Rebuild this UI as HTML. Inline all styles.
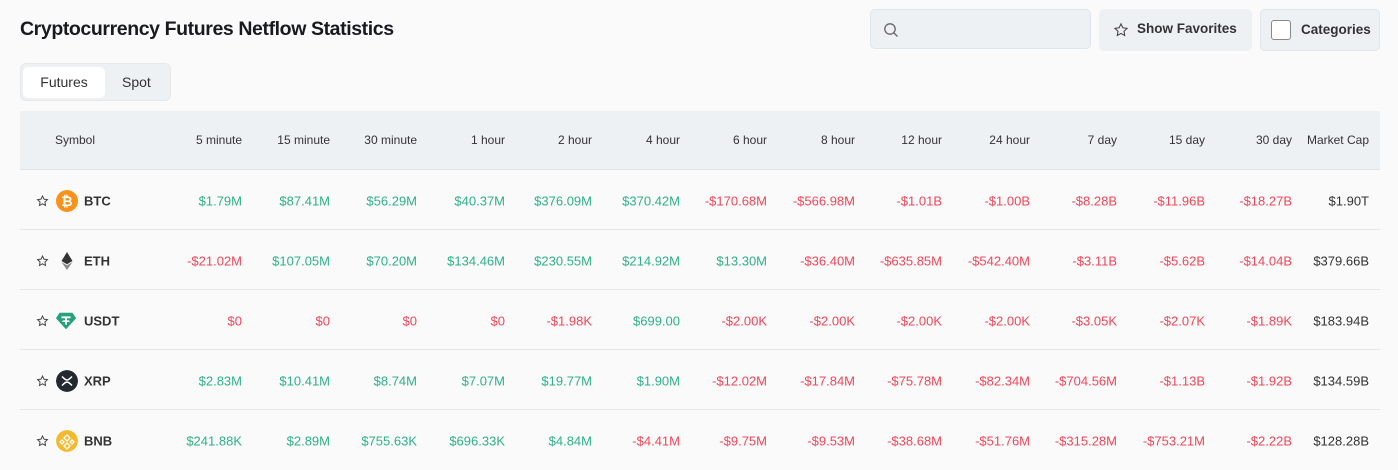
<!DOCTYPE html>
<html><head><meta charset="utf-8"><style>
*{margin:0;padding:0;box-sizing:border-box}
body{width:1398px;height:468px;background:#fafafa;font-family:"Liberation Sans",sans-serif;position:relative;overflow:hidden;color:#1e2329}
.a{position:absolute;white-space:nowrap}
h1{position:absolute;left:20px;top:18px;font-size:19.5px;font-weight:700;letter-spacing:-0.4px;color:#181a20}
.tabs{left:20px;top:63px;width:151px;height:38px;background:#eef1f4;border-radius:6px;border:1px solid #e6e8ea}
.tab{position:absolute;top:3px;height:31px;line-height:31px;font-size:14px;color:#333}
.hdr{left:20px;top:111px;width:1360px;height:59px;background:#eef1f4;border-bottom:1px solid #e2e5e8}
.row{left:20px;width:1360px;height:60px;border-bottom:1px solid #e6e6e6}
.h{font-size:12px;color:#333;transform:translateY(-50%)}
.c{font-size:13px;transform:translateY(-50%)}
.g{color:#2eb08a}.r{color:#f0475a}.k{color:#333}
.sym{font-size:13px;font-weight:700;color:#333;transform:translateY(-50%)}
.star{transform:translateY(-50%)}
.ico{width:22px;height:22px;border-radius:50%;transform:translateY(-50%)}
</style></head><body>
<h1>Cryptocurrency Futures Netflow Statistics</h1>
<div class="a" style="left:870px;top:9px;width:221px;height:40px;background:#eef1f4;border:1px solid #dfe5ec;border-radius:5px"><svg style="position:absolute;left:12px;top:12px" width="16" height="16" viewBox="0 0 16 16" fill="none" stroke="#666" stroke-width="1.3"><circle cx="7" cy="7" r="5.2"/><path d="M11 11l3.5 3.5"/></svg></div>
<div class="a" style="left:1099px;top:9px;width:153px;height:42px;background:#eef1f4;border-radius:5px"><svg style="position:absolute;left:14px;top:13px" width="16" height="16" viewBox="0 0 24 24" fill="none" stroke="#444" stroke-width="1.6"><path d="M12 2.8l2.8 5.8 6.3.9-4.6 4.4 1.1 6.3L12 17.2l-5.6 3 1.1-6.3L2.9 9.5l6.3-.9z"/></svg><span style="position:absolute;left:38px;top:12px;font-size:13.5px;font-weight:700;color:#333">Show Favorites</span></div>
<div class="a" style="left:1260px;top:9px;width:120px;height:42px;background:#eef1f4;border:1px solid #dfe5ec;border-radius:5px"><div style="position:absolute;left:10px;top:10px;width:20px;height:20px;border:1px solid #888;border-radius:3px;background:#fff"></div><span style="position:absolute;left:40px;top:12px;font-size:13.5px;font-weight:700;color:#333">Categories</span></div>
<div class="a tabs"><div class="tab" style="left:2px;width:82px;background:#fff;border-radius:5px;text-align:center">Futures</div><div class="tab" style="left:101px">Spot</div></div>
<div class="a hdr"></div>
<div class="a row" style="top:170px"></div><div class="a row" style="top:230px"></div><div class="a row" style="top:290px"></div><div class="a row" style="top:350px"></div><div class="a row" style="top:410px;border:none"></div>
<span class="a h" style="left:55px;top:140px">Symbol</span>
<span class="a h" style="right:1156px;top:140px">5 minute</span>
<span class="a h" style="right:1068px;top:140px">15 minute</span>
<span class="a h" style="right:981px;top:140px">30 minute</span>
<span class="a h" style="right:893px;top:140px">1 hour</span>
<span class="a h" style="right:806px;top:140px">2 hour</span>
<span class="a h" style="right:718px;top:140px">4 hour</span>
<span class="a h" style="right:631px;top:140px">6 hour</span>
<span class="a h" style="right:543px;top:140px">8 hour</span>
<span class="a h" style="right:456px;top:140px">12 hour</span>
<span class="a h" style="right:368px;top:140px">24 hour</span>
<span class="a h" style="right:281px;top:140px">7 day</span>
<span class="a h" style="right:193px;top:140px">15 day</span>
<span class="a h" style="right:106px;top:140px">30 day</span>
<span class="a h" style="right:29px;top:140px">Market Cap</span>

<!-- stars -->
<svg class="a star" style="left:36px;top:201px" width="13" height="13" viewBox="0 0 24 24" fill="none" stroke="#444" stroke-width="1.8"><path d="M12 2.8l2.8 5.8 6.3.9-4.6 4.4 1.1 6.3L12 17.2l-5.6 3 1.1-6.3L2.9 9.5l6.3-.9z"/></svg>
<svg class="a star" style="left:36px;top:261px" width="13" height="13" viewBox="0 0 24 24" fill="none" stroke="#444" stroke-width="1.8"><path d="M12 2.8l2.8 5.8 6.3.9-4.6 4.4 1.1 6.3L12 17.2l-5.6 3 1.1-6.3L2.9 9.5l6.3-.9z"/></svg>
<svg class="a star" style="left:36px;top:321px" width="13" height="13" viewBox="0 0 24 24" fill="none" stroke="#444" stroke-width="1.8"><path d="M12 2.8l2.8 5.8 6.3.9-4.6 4.4 1.1 6.3L12 17.2l-5.6 3 1.1-6.3L2.9 9.5l6.3-.9z"/></svg>
<svg class="a star" style="left:36px;top:381px" width="13" height="13" viewBox="0 0 24 24" fill="none" stroke="#444" stroke-width="1.8"><path d="M12 2.8l2.8 5.8 6.3.9-4.6 4.4 1.1 6.3L12 17.2l-5.6 3 1.1-6.3L2.9 9.5l6.3-.9z"/></svg>
<svg class="a star" style="left:36px;top:441px" width="13" height="13" viewBox="0 0 24 24" fill="none" stroke="#444" stroke-width="1.8"><path d="M12 2.8l2.8 5.8 6.3.9-4.6 4.4 1.1 6.3L12 17.2l-5.6 3 1.1-6.3L2.9 9.5l6.3-.9z"/></svg>
<!-- icons -->
<div class="a ico" style="left:56px;top:201px;background:#f7931a;color:#fff;font-size:14px;font-weight:700;text-align:center;line-height:22px">₿</div>
<svg class="a ico" style="left:56px;top:261px" width="22" height="22" viewBox="0 0 22 22"><path d="M11 2l5.5 9L11 14.2 5.5 11z" fill="#343434"/><path d="M11 15.3l5.5-3.2L11 20l-5.5-7.9z" fill="#8c8c8c"/></svg>
<svg class="a ico" style="left:55px;top:321px;border-radius:0" width="24" height="22" viewBox="0 0 24 22"><path d="M5 2h14l4 6-11 12L1 8z" fill="#26a17b"/><path d="M7 6h10v2h-4v2.2c2 .1 3.5.5 3.5 1s-1.5.9-3.5 1V15h-2v-2.8c-2-.1-3.5-.5-3.5-1s1.5-.9 3.5-1V8H7z" fill="#fff"/></svg>
<svg class="a ico" style="left:56px;top:381px" width="22" height="22" viewBox="0 0 22 22"><circle cx="11" cy="11" r="11" fill="#23292f"/><path d="M6 6.5c2.5 2.5 3.5 3.5 5 3.5s2.5-1 5-3.5M6 15.5c2.5-2.5 3.5-3.5 5-3.5s2.5 1 5 3.5" stroke="#fff" stroke-width="1.5" fill="none"/></svg>
<svg class="a ico" style="left:56px;top:441px" width="22" height="22" viewBox="0 0 22 22"><circle cx="11" cy="11" r="11" fill="#f3ba2f"/><path d="M11 5l3 3-3 3-3-3zM6 10l2 2-2 2-2-2zM16 10l2 2-2 2-2-2zM11 13l3 3-3 3-3-3z" fill="none" stroke="#fff" stroke-width="1.3"/></svg>
<span class="a sym" style="left:84px;top:201px">BTC</span>
<span class="a sym" style="left:84px;top:261px">ETH</span>
<span class="a sym" style="left:84px;top:321px">USDT</span>
<span class="a sym" style="left:84px;top:381px">XRP</span>
<span class="a sym" style="left:84px;top:441px">BNB</span>

<!-- BTC -->
<span class="a c g" style="right:1156px;top:201px">$1.79M</span>
<span class="a c g" style="right:1068px;top:201px">$87.41M</span>
<span class="a c g" style="right:981px;top:201px">$56.29M</span>
<span class="a c g" style="right:893px;top:201px">$40.37M</span>
<span class="a c g" style="right:806px;top:201px">$376.09M</span>
<span class="a c g" style="right:718px;top:201px">$370.42M</span>
<span class="a c r" style="right:631px;top:201px">-$170.68M</span>
<span class="a c r" style="right:543px;top:201px">-$566.98M</span>
<span class="a c r" style="right:456px;top:201px">-$1.01B</span>
<span class="a c r" style="right:368px;top:201px">-$1.00B</span>
<span class="a c r" style="right:281px;top:201px">-$8.28B</span>
<span class="a c r" style="right:193px;top:201px">-$11.96B</span>
<span class="a c r" style="right:106px;top:201px">-$18.27B</span>
<span class="a c k" style="right:29px;top:201px">$1.90T</span>
<!-- ETH -->
<span class="a c r" style="right:1156px;top:261px">-$21.02M</span>
<span class="a c g" style="right:1068px;top:261px">$107.05M</span>
<span class="a c g" style="right:981px;top:261px">$70.20M</span>
<span class="a c g" style="right:893px;top:261px">$134.46M</span>
<span class="a c g" style="right:806px;top:261px">$230.55M</span>
<span class="a c g" style="right:718px;top:261px">$214.92M</span>
<span class="a c g" style="right:631px;top:261px">$13.30M</span>
<span class="a c r" style="right:543px;top:261px">-$36.40M</span>
<span class="a c r" style="right:456px;top:261px">-$635.85M</span>
<span class="a c r" style="right:368px;top:261px">-$542.40M</span>
<span class="a c r" style="right:281px;top:261px">-$3.11B</span>
<span class="a c r" style="right:193px;top:261px">-$5.62B</span>
<span class="a c r" style="right:106px;top:261px">-$14.04B</span>
<span class="a c k" style="right:29px;top:261px">$379.66B</span>
<!-- USDT -->
<span class="a c r" style="right:1156px;top:321px">$0</span>
<span class="a c r" style="right:1068px;top:321px">$0</span>
<span class="a c r" style="right:981px;top:321px">$0</span>
<span class="a c r" style="right:893px;top:321px">$0</span>
<span class="a c r" style="right:806px;top:321px">-$1.98K</span>
<span class="a c g" style="right:718px;top:321px">$699.00</span>
<span class="a c r" style="right:631px;top:321px">-$2.00K</span>
<span class="a c r" style="right:543px;top:321px">-$2.00K</span>
<span class="a c r" style="right:456px;top:321px">-$2.00K</span>
<span class="a c r" style="right:368px;top:321px">-$2.00K</span>
<span class="a c r" style="right:281px;top:321px">-$3.05K</span>
<span class="a c r" style="right:193px;top:321px">-$2.07K</span>
<span class="a c r" style="right:106px;top:321px">-$1.89K</span>
<span class="a c k" style="right:29px;top:321px">$183.94B</span>
<!-- XRP -->
<span class="a c g" style="right:1156px;top:381px">$2.83M</span>
<span class="a c g" style="right:1068px;top:381px">$10.41M</span>
<span class="a c g" style="right:981px;top:381px">$8.74M</span>
<span class="a c g" style="right:893px;top:381px">$7.07M</span>
<span class="a c g" style="right:806px;top:381px">$19.77M</span>
<span class="a c g" style="right:718px;top:381px">$1.90M</span>
<span class="a c r" style="right:631px;top:381px">-$12.02M</span>
<span class="a c r" style="right:543px;top:381px">-$17.84M</span>
<span class="a c r" style="right:456px;top:381px">-$75.78M</span>
<span class="a c r" style="right:368px;top:381px">-$82.34M</span>
<span class="a c r" style="right:281px;top:381px">-$704.56M</span>
<span class="a c r" style="right:193px;top:381px">-$1.13B</span>
<span class="a c r" style="right:106px;top:381px">-$1.92B</span>
<span class="a c k" style="right:29px;top:381px">$134.59B</span>
<!-- BNB -->
<span class="a c g" style="right:1156px;top:441px">$241.88K</span>
<span class="a c g" style="right:1068px;top:441px">$2.89M</span>
<span class="a c g" style="right:981px;top:441px">$755.63K</span>
<span class="a c g" style="right:893px;top:441px">$696.33K</span>
<span class="a c g" style="right:806px;top:441px">$4.84M</span>
<span class="a c r" style="right:718px;top:441px">-$4.41M</span>
<span class="a c r" style="right:631px;top:441px">-$9.75M</span>
<span class="a c r" style="right:543px;top:441px">-$9.53M</span>
<span class="a c r" style="right:456px;top:441px">-$38.68M</span>
<span class="a c r" style="right:368px;top:441px">-$51.76M</span>
<span class="a c r" style="right:281px;top:441px">-$315.28M</span>
<span class="a c r" style="right:193px;top:441px">-$753.21M</span>
<span class="a c r" style="right:106px;top:441px">-$2.22B</span>
<span class="a c k" style="right:29px;top:441px">$128.28B</span>
</body></html>
